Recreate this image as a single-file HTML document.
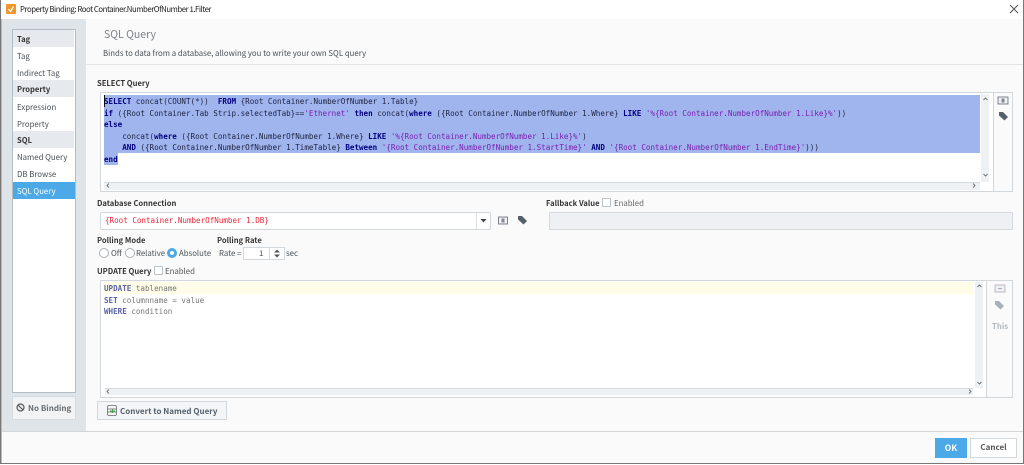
<!DOCTYPE html>
<html><head><meta charset="utf-8"><style>
html,body{margin:0;padding:0;background:#fff}
#w{position:relative;width:1024px;height:465px;overflow:hidden;background:#fff;font-family:"Noto Sans CJK JP","Liberation Sans",sans-serif;font-size:7.8px;color:#4a5055}
#w div,#w span.a,#w svg{position:absolute}
.t{white-space:pre;line-height:12px;height:12px;margin-top:1px}
.b{font-weight:bold;color:#333;font-size:7.6px}
.m{font-family:"DejaVu Sans Mono",monospace;font-size:7.57px;white-space:pre;line-height:12px;height:12px;color:#1c2340}
.m b{color:#000080}.m i{font-style:normal;color:#7a1fb0}
.u{color:#777}.u b{color:#5a63a8}
.box{box-sizing:border-box;border:1px solid #d2d7dc;background:#fff}
.sb{background:#eef1f3}
.it{left:17px;color:#4a5055}
.hd{left:13px;width:61px;height:17px;background:#e6e9ed}
.cb{box-sizing:border-box;width:9px;height:9px;border:1px solid #bcc3c9;border-radius:1px;background:#fff}
.rd{box-sizing:border-box;width:10px;height:10px;border:1px solid #aab2b8;border-radius:50%;background:#fff}
</style></head><body><div id="w">
<div style="left:0;top:0;width:1024px;height:19px;background:#fff"></div>
<div style="left:6px;top:4px;width:10px;height:10px;background:#f0962a;border-radius:1px"></div>
<svg style="left:6px;top:4px" width="10" height="10"><path d="M2.5 5 L4.5 7.5 L7.5 2.5" stroke="#fff" stroke-width="1.3" fill="none"/></svg>
<div class="t" style="left:20px;top:3px;color:#222;letter-spacing:-.46px">Property Binding: Root Container.NumberOfNumber 1.Filter</div>
<svg style="left:1009px;top:4px" width="11" height="11"><path d="M1 1L9 9M9 1L1 9" stroke="#555" stroke-width="1" fill="none"/></svg>

<div style="left:2px;top:19px;width:84px;height:412px;background:#dfe4e8"></div>
<div style="left:86px;top:19px;width:937px;height:412px;background:#fafafa"></div>
<div style="left:86px;top:64px;width:937px;height:1px;background:#e2e5e8"></div>
<div class="t" style="left:104px;top:27px;font-size:10.5px;height:14px;line-height:14px;color:#7b8288">SQL Query</div>
<div class="t" style="left:103px;top:47px;color:#4a5055">Binds to data from a database, allowing you to write your own SQL query</div>

<div class="box" style="left:12px;top:29px;width:64px;height:364px;border-color:#b3bdc6"></div>
<div class="hd" style="top:30px"></div><div class="hd" style="top:80px"></div><div class="hd" style="top:131px"></div>
<div style="left:13px;top:182px;width:62px;height:17px;background:#4aa9e6"></div>
<div class="t it b" style="top:33px;color:#333">Tag</div>
<div class="t it" style="top:50px">Tag</div>
<div class="t it" style="top:67px">Indirect Tag</div>
<div class="t it b" style="top:83px;color:#333">Property</div>
<div class="t it" style="top:101px">Expression</div>
<div class="t it" style="top:118px">Property</div>
<div class="t it b" style="top:134px;color:#333">SQL</div>
<div class="t it" style="top:151px">Named Query</div>
<div class="t it" style="top:168px">DB Browse</div>
<div class="t it" style="top:185px;color:#fff">SQL Query</div>

<div style="box-sizing:border-box;left:12px;top:396px;width:64px;height:24px;background:#f1f3f5;border:1px solid #d5dade"></div>
<svg style="left:15px;top:402px" width="11" height="11"><circle cx="5.5" cy="5.5" r="3.5" stroke="#555" stroke-width="1.2" fill="none"/><path d="M3 3L8 8" stroke="#555" stroke-width="1.2"/></svg>
<div class="t" style="left:28px;top:402px;font-weight:bold;color:#666d73;font-size:8px">No Binding</div>

<div class="t b" style="left:97px;top:77px">SELECT Query</div>
<div class="box" style="left:100px;top:92px;width:913px;height:100px"></div>
<div style="left:993px;top:92px;width:1px;height:100px;background:#d2d7dc"></div>
<div style="left:994px;top:93px;width:18px;height:98px;background:#fafafa"></div>
<div style="left:104px;top:95px;width:876px;height:58px;background:#a0b4ee"></div>
<div style="left:104px;top:153px;width:14px;height:12px;background:#a0b4ee"></div>
<div style="left:104px;top:95px;width:1px;height:12px;background:#111"></div>
<div class="m" style="left:104px;top:96px"><b>SELECT</b> concat(COUNT(*))  <b>FROM</b> {Root Container.NumberOfNumber 1.Table}</div>
<div class="m" style="left:104px;top:108px"><b>if</b> ({Root Container.Tab Strip.selectedTab}==<i>'Ethernet'</i> <b>then</b> concat(<b>where</b> ({Root Container.NumberOfNumber 1.Where} <b>LIKE</b> <i>'%{Root Container.NumberOfNumber 1.Like}%'</i>))</div>
<div class="m" style="left:104px;top:119px"><b>else</b></div>
<div class="m" style="left:104px;top:131px">    concat(<b>where</b> ({Root Container.NumberOfNumber 1.Where} <b>LIKE</b> <i>'%{Root Container.NumberOfNumber 1.Like}%'</i>)</div>
<div class="m" style="left:104px;top:142px">    <b>AND</b> ({Root Container.NumberOfNumber 1.TimeTable} <b>Between</b> <i>'{Root Container.NumberOfNumber 1.StartTime}'</i> <b>AND</b> <i>'{Root Container.NumberOfNumber 1.EndTime}'</i>)))</div>
<div class="m" style="left:104px;top:154px"><b>end</b></div>
<div class="sb" style="left:981px;top:94px;width:8px;height:88px"></div>
<div class="sb" style="left:104px;top:182px;width:876px;height:7px;border-top:1px solid #d5dade"></div>
<svg style="left:982px;top:96px" width="7" height="90"><path d="M1.5 4L3.5 2L5.5 4M1.5 78L3.5 80L5.5 78" stroke="#555" fill="none" stroke-width=".8"/></svg>
<svg style="left:106px;top:182px" width="874" height="7"><path d="M3 1.5L1 3.5L3 5.5M867 1.5L869 3.5L867 5.5" stroke="#555" fill="none" stroke-width=".8"/></svg>
<svg style="left:997px;top:96px" width="13" height="28"><rect x="1" y="1" width="10" height="7" fill="#eef0f2" stroke="#667" stroke-width=".8"/><path d="M4.5 2.5h3v4h-3z" fill="#889"/><path d="M2 16h4l5 5-3.5 3.5-5.5-5z" fill="#556068"/></svg>

<div class="t b" style="left:97px;top:197px">Database Connection</div>
<div class="box" style="left:100px;top:212px;width:391px;height:18px;border-radius:2px"></div>
<div style="left:476px;top:213px;width:1px;height:16px;background:#dde1e4"></div>
<svg style="left:480px;top:218px" width="8" height="6"><path d="M0.5 1h6l-3 3.5z" fill="#444"/></svg>
<div class="m" style="left:105px;top:215px;color:#e8283a">{Root Container.NumberOfNumber 1.DB}</div>
<svg style="left:497px;top:215px" width="34" height="12"><rect x="1.5" y="2" width="9" height="7" fill="#eef0f2" stroke="#667" stroke-width=".8"/><path d="M4.5 3.5h3v4h-3z" fill="#889"/><path d="M21 1h4l5 5-3.5 3.5-5.5-5z" fill="#556068"/></svg>
<div class="t b" style="left:546px;top:197px">Fallback Value</div>
<div class="cb" style="left:602px;top:198px"></div>
<div class="t" style="left:614px;top:197px;color:#666">Enabled</div>
<div style="box-sizing:border-box;left:549px;top:212px;width:464px;height:18px;background:#eef0f4;border:1px solid #d5d9dd;border-radius:1px"></div>

<div class="t b" style="left:97px;top:234px">Polling Mode</div>
<div class="t b" style="left:217px;top:234px">Polling Rate</div>
<div class="rd" style="left:99px;top:248px"></div>
<div class="t" style="left:111px;top:247px">Off</div>
<div class="rd" style="left:125px;top:248px"></div>
<div class="t" style="left:136px;top:247px">Relative</div>
<div class="rd" style="left:167px;top:248px;border:3px solid #4aa9e6"></div>
<div class="t" style="left:179px;top:247px">Absolute</div>
<div class="t" style="left:219px;top:247px">Rate =</div>
<div class="box" style="left:243px;top:247px;width:42px;height:13px"></div>
<div style="left:269px;top:248px;width:1px;height:11px;background:#d2d7dc"></div>
<div class="t" style="left:259px;top:247px">1</div>
<svg style="left:270px;top:248px" width="14" height="11"><path d="M4 4.5h6l-3-3zM4 6.5h6l-3 3z" fill="#555"/></svg>
<div class="t" style="left:286px;top:247px">sec</div>

<div class="t b" style="left:97px;top:265px">UPDATE Query</div>
<div class="cb" style="left:154px;top:266px"></div>
<div class="t" style="left:165px;top:265px;color:#555">Enabled</div>
<div class="box" style="left:100px;top:280px;width:913px;height:118px"></div>
<div style="left:986px;top:280px;width:1px;height:118px;background:#d2d7dc"></div>
<div style="left:987px;top:281px;width:25px;height:116px;background:#fafafa"></div>
<div style="left:103px;top:282px;width:870px;height:12px;background:#fffde8"></div>
<div class="m u" style="left:104px;top:283px"><b>UPDATE</b> tablename</div>
<div class="m u" style="left:104px;top:295px"><b>SET</b> columnname = value</div>
<div class="m u" style="left:104px;top:306px"><b>WHERE</b> condition</div>
<div class="sb" style="left:975px;top:282px;width:8px;height:106px"></div>
<div class="sb" style="left:105px;top:388px;width:868px;height:6px;border-top:1px solid #d5dade"></div>
<svg style="left:976px;top:283px" width="7" height="104"><path d="M1.5 4L3.5 2L5.5 4M1.5 99L3.5 101L5.5 99" stroke="#555" fill="none" stroke-width=".8"/></svg>
<svg style="left:106px;top:388px" width="866" height="7"><path d="M3 1.5L1 3.5L3 5.5M863 1.5L865 3.5L863 5.5" stroke="#555" fill="none" stroke-width=".8"/></svg>
<svg style="left:993px;top:284px" width="14" height="30"><rect x="2" y="1" width="10" height="7" fill="#eef0f2" stroke="#aab" stroke-width=".8"/><path d="M5 4.5h4" stroke="#aab"/><path d="M2 17h4l5 5-3.5 3.5-5.5-5z" fill="#a9b0b8"/></svg>
<div class="t" style="left:992px;top:320px;font-weight:bold;color:#b0b8c0">This</div>

<div style="box-sizing:border-box;left:97px;top:401px;width:130px;height:19px;background:#f3f5f6;border:1px solid #d2d7dc"></div>
<svg style="left:107px;top:405px" width="11" height="12"><rect x=".5" y=".5" width="9" height="10" rx="1.5" fill="#f5f5ee" stroke="#667" stroke-width=".8"/><path d="M1 4h8M1 7h8" stroke="#667" stroke-width=".7"/><path d="M3 6h5M5.5 4v4" stroke="#3fa64a" stroke-width="1"/></svg>
<div class="t" style="left:120px;top:405px;font-weight:bold;color:#55606a;font-size:8px">Convert to Named Query</div>

<div style="left:2px;top:431px;width:1021px;height:1px;background:#d3d6d9"></div>
<div style="left:2px;top:432px;width:1021px;height:31px;background:#fafafa"></div>
<div class="t" style="left:935px;top:438px;width:32px;height:20px;line-height:20px;margin-top:0;text-align:center;background:#4aa9e6;color:#fff;font-weight:bold;font-size:8.5px">OK</div>
<div class="t" style="box-sizing:border-box;left:970px;top:438px;width:47px;height:20px;line-height:18px;margin-top:0;text-align:center;background:#fff;border:1px solid #d2d7dc;color:#555;font-weight:bold;font-size:8px">Cancel</div>

<div style="left:0;top:0;width:1px;height:465px;background:#777"></div>
<div style="left:1px;top:19px;width:1px;height:444px;background:#bbb"></div>
<div style="left:1023px;top:0;width:1px;height:465px;background:#777"></div>
<div style="left:0;top:463px;width:1024px;height:1px;background:#777"></div>
<div style="left:0;top:464px;width:1024px;height:1px;background:#fff"></div>
</div></body></html>
